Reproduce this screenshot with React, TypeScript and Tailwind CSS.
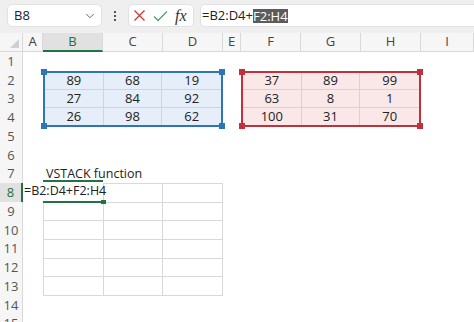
import { ChevronDown } from 'lucide-react'

const colHeaders = ['A', 'B', 'C', 'D', 'E', 'F', 'G', 'H', 'I']
const blueData = [
  [89, 68, 19],
  [27, 84, 92],
  [26, 98, 62],
]
const redData = [
  [37, 89, 99],
  [63, 8, 1],
  [100, 31, 70],
]

function Handle({ pos, color }: { pos: string; color: string }) {
  return <div className={`absolute w-[6px] h-[6px] ${pos} ${color}`} />
}

function Range({ data, tone }: { data: number[][]; tone: 'blue' | 'red' }) {
  const isBlue = tone === 'blue'
  const border = isBlue ? 'border-[#2e75b6]' : 'border-[#c0313c]'
  const fill = isBlue ? 'bg-[#e6eff9]' : 'bg-[#fae8e9]'
  const handle = isBlue ? 'bg-[#2e75b6]' : 'bg-[#c0313c]'
  return (
    <div className={`relative h-full min-h-0 border-2 ${border} ${fill} grid grid-cols-3 grid-rows-3`}>
      {data.flat().map((v, i) => (
        <div
          key={i}
          className={`min-h-0 leading-none flex items-center justify-center text-[13px] text-[#222] border-[#d4d4d4] ${i % 3 !== 2 ? 'border-r' : ''} ${i < 6 ? 'border-b' : ''}`}
        >
          {v}
        </div>
      ))}
      <Handle pos="-left-[4px] -top-[4px]" color={handle} />
      <Handle pos="-right-[4px] -top-[4px]" color={handle} />
      <Handle pos="-left-[4px] -bottom-[4px]" color={handle} />
      <Handle pos="-right-[4px] -bottom-[4px]" color={handle} />
    </div>
  )
}

export default function App() {
  return (
    <div
      className="w-[474px] h-[322px] overflow-hidden bg-white relative"
      style={{ fontFamily: '"Segoe UI", "Open Sans", "Liberation Sans", sans-serif' }}
    >
      {/* formula bar */}
      <div className="h-[33px] bg-[#efefef] flex items-start pt-[4px] pl-[7px] gap-[6px]">
        <div className="w-[95px] h-[23px] bg-white rounded-[5px] border border-[#e2e2e2] flex items-center justify-between pl-[6px] pr-[4px]">
          <span className="text-[13px] text-[#222]">B8</span>
          <ChevronDown className="w-[14px] h-[14px] text-[#555]" strokeWidth={1.5} />
        </div>
        <div className="w-[14px] h-[23px] flex flex-col items-center justify-center gap-[2px]">
          <div className="w-[2px] h-[2px] bg-[#555]" />
          <div className="w-[2px] h-[2px] bg-[#555]" />
          <div className="w-[2px] h-[2px] bg-[#555]" />
        </div>
        <div className="w-[66px] h-[23px] bg-white rounded-[5px] border border-[#e2e2e2] flex items-center pl-[4px] gap-[7px]">
          <svg width="13" height="13" viewBox="0 0 13 13">
            <path d="M1.5 1.5 L11.5 11.5 M11.5 1.5 L1.5 11.5" stroke="#d23a3a" strokeWidth="1.4" />
          </svg>
          <svg width="15" height="12" viewBox="0 0 15 12">
            <path d="M1 6.5 L5 10.5 L14 1.5" stroke="#5aa36c" strokeWidth="1.4" fill="none" />
          </svg>
          <span
            className="text-[16px] italic text-[#333] leading-none"
            style={{ fontFamily: '"Liberation Serif", serif' }}
          >
            fx
          </span>
        </div>
        <div className="flex-1 h-[23px] bg-white rounded-l-[5px] border border-r-0 border-[#e2e2e2] flex items-center pl-[1px] text-[13px] text-[#222]">
          <span>=B2:D4+</span>
          <span className="bg-[#5c5c5c] text-white leading-[14px]">F2:H4</span>
        </div>
      </div>

      {/* sheet */}
      <div className="relative grid grid-cols-[23px_20px_60px_60px_60px_18px_60px_60px_60px_1fr] grid-rows-[19px_repeat(15,18.75px)]">
        {/* corner */}
        <div className="col-start-1 row-start-1 bg-[#f6f6f6] border-b border-r border-[#d9d9d9] relative">
          <svg className="absolute right-[3px] bottom-[3px]" width="9" height="9" viewBox="0 0 9 9">
            <path d="M9 0 L9 9 L0 9 Z" fill="#d0d0d0" />
          </svg>
        </div>
        {colHeaders.map((c) => (
          <div
            key={c}
            className={`row-start-1 flex items-center justify-center text-[13px] border-r ${
              c === 'B'
                ? 'bg-[#e1e1e1] text-[#217346] border-b-2 border-b-[#217346] border-r-[#d9d9d9]'
                : 'bg-[#f6f6f6] text-[#444] border-b border-[#d9d9d9]'
            }`}
          >
            {c}
          </div>
        ))}

        {/* row headers */}
        {Array.from({ length: 15 }, (_, i) => i + 1).map((n) => (
          <div
            key={n}
            className={`col-start-1 flex items-center justify-center text-[13px] leading-none ${
              n === 8
                ? 'bg-[#e1e1e1] text-[#217346] border-r-2 border-[#217346]'
                : 'bg-[#f6f6f6] text-[#555] border-r border-[#d9d9d9]'
            }`}
            style={{ gridRowStart: n + 1 }}
          >
            {n}
          </div>
        ))}

        {/* ranges */}
        <div className="col-start-3 col-span-3 row-start-3 row-span-3 min-h-0">
          <Range data={blueData} tone="blue" />
        </div>
        <div className="col-start-7 col-span-3 row-start-3 row-span-3 min-h-0">
          <Range data={redData} tone="red" />
        </div>

        {/* label */}
        <div className="col-start-3 col-span-3 row-start-8 flex items-center pl-[3px] text-[12.5px] text-[#222] leading-none">
          VSTACK function
        </div>

        {/* result area */}
        <div className="col-start-3 col-span-3 row-start-9 row-span-6 grid grid-cols-3 grid-rows-6 border-l border-t border-[#d9d9d9]">
          {Array.from({ length: 18 }).map((_, i) => (
            <div key={i} className="border-r border-b border-[#d9d9d9]" />
          ))}
        </div>

        {/* in-cell edit overlay */}
        <div className="absolute left-[24px] top-[149px] w-[79px] h-[19px] bg-white flex items-center text-[12.5px] text-[#222] leading-none">
          =B2:D4+F2:H4
        </div>
        <div className="absolute left-[43px] top-[147px] w-[60px] h-[2px] bg-[#217346]" />
        <div className="absolute left-[43px] top-[168px] w-[58px] h-[2px] bg-[#217346]" />
        <div className="absolute left-[101px] top-[167px] w-[5px] h-[4px] bg-[#217346]" />
      </div>
    </div>
  )
}
